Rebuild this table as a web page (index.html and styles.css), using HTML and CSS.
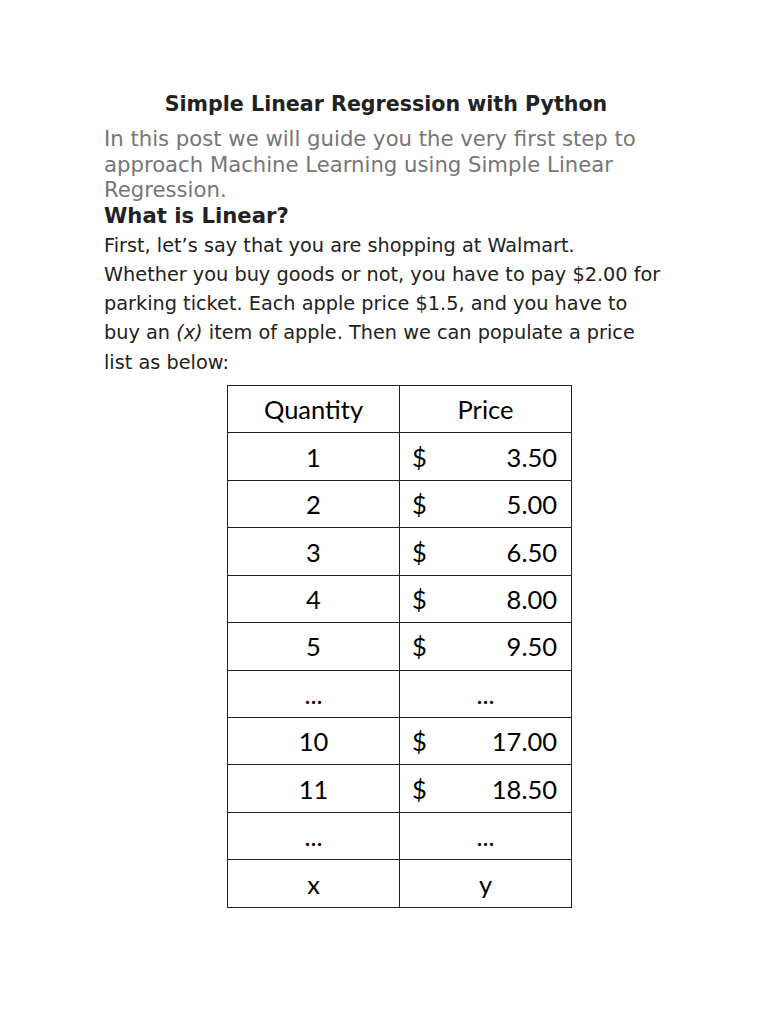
FILE: index.html
```html
<!DOCTYPE html>
<html>
<head>
<meta charset="utf-8">
<link rel="stylesheet" href="styles.css">
</head>
<body>
<main class="page">
  <h1 class="title">Simple Linear Regression with Python</h1>
  <p class="lead">In this post we will guide you the very first step to approach Machine Learning using Simple Linear Regression.</p>
  <h2 class="heading">What is Linear?</h2>
  <p class="body">First, let’s say that you are shopping at Walmart. Whether you buy goods or not, you have to pay $2.00 for parking ticket. Each apple price $1.5, and you have to buy an <em>(x)</em> item of apple. Then we can populate a price list as below:</p>
  <div class="table-wrap">
    <table class="prices">
      <tr><th>Quantity</th><th>Price</th></tr>
      <tr><td>1</td><td><span class="cur">$</span><span class="amt">3.50</span></td></tr>
      <tr><td>2</td><td><span class="cur">$</span><span class="amt">5.00</span></td></tr>
      <tr><td>3</td><td><span class="cur">$</span><span class="amt">6.50</span></td></tr>
      <tr><td>4</td><td><span class="cur">$</span><span class="amt">8.00</span></td></tr>
      <tr><td>5</td><td><span class="cur">$</span><span class="amt">9.50</span></td></tr>
      <tr><td>...</td><td>...</td></tr>
      <tr><td>10</td><td><span class="cur">$</span><span class="amt">17.00</span></td></tr>
      <tr><td>11</td><td><span class="cur">$</span><span class="amt">18.50</span></td></tr>
      <tr><td>...</td><td>...</td></tr>
      <tr><td>x</td><td>y</td></tr>
    </table>
  </div>
</main>
</body>
</html>
```

FILE: styles.css
```css
html, body {
  margin: 0;
  padding: 0;
  background: #ffffff;
}
.page {
  width: 564px;
  margin: 0 0 0 104px;
  padding-top: 90px;
  font-family: "DejaVu Sans", sans-serif;
  color: #222222;
}
.title {
  margin: 0;
  text-align: center;
  font-size: 20.6px;
  font-weight: bold;
  line-height: 28px;
  color: #222;
  white-space: nowrap;
}
.lead {
  margin: 8px 0 0 0;
  font-size: 21.2px;
  line-height: 25.5px;
  color: #767676;
}
.heading {
  margin: 0;
  font-size: 21.2px;
  font-weight: bold;
  line-height: 26px;
  color: #222;
}
.body {
  width: 558px;
  margin: 2px 0 0 0;
  font-size: 19.3px;
  line-height: 29.3px;
  color: #222;
}
.body em {
  font-style: italic;
}
.table-wrap {
  margin: 8px 0 0 123px;
}
.prices {
  border-collapse: collapse;
  font-family: Lato, "Open Sans", sans-serif;
  font-size: 25.5px;
  color: #000;
}
.prices th, .prices td {
  border: 1px solid #222;
  height: 46.45px;
  padding: 0;
  text-align: center;
  font-weight: normal;
}
.prices th:first-child, .prices td:first-child,
.prices th:last-child, .prices td:last-child {
  width: 171px;
}
.cur {
  float: left;
  margin-left: 12px;
}
.amt {
  float: right;
  margin-right: 14px;
}
```
